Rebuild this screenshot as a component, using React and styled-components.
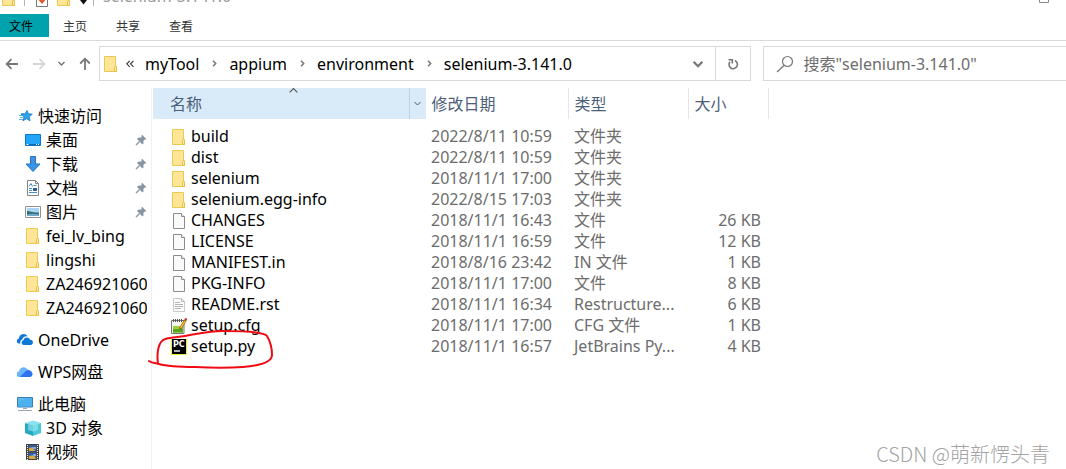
import { useState } from 'react';
import styled, { createGlobalStyle } from 'styled-components';

const GlobalStyle = createGlobalStyle`
    * {
        box-sizing: border-box;
    }

    html, body, #root {
        height: 100%;
    }

    body {
        margin: 0;
        overflow: hidden;
        background: #fff;
        color: #000;
        font: 16px/24px 'Noto Sans', 'Noto Sans CJK SC', sans-serif;
    }

    button, input {
        margin: 0;
        padding: 0;
        border: 0;
        background: none;
        color: inherit;
        font: inherit;
    }

    a {
        color: inherit;
        text-decoration: none;
    }

    svg {
        display: block;
        flex: none;
    }
`;

const Window = styled.div`
    display: flex;
    flex-direction: column;
    min-height: 100%;
    position: relative;
`;

const TitleBar = styled.header`
    display: flex;
    align-items: flex-end;
    justify-content: space-between;
    height: 14px;
    overflow: hidden;
`;

const QuickBar = styled.div`
    display: flex;
    align-items: center;
    height: 32px;
`;

const QuickItem = styled.span`
    display: flex;
    align-items: center;
    justify-content: center;
    width: ${props => props.$width}px;
`;

const Divider = styled.span`
    width: 1px;
    height: 16px;
    background: #b5b5b5;
`;

const Title = styled.span`
    padding: 0 0 4px 8px;
    color: #999;
`;

const MaxButton = styled.button`
    display: flex;
    align-items: center;
    justify-content: center;
    width: 45px;
    height: 32px;
`;

const Ribbon = styled.nav`
    display: flex;
    height: 27px;
    border-bottom: 1px solid #dadbdc;
    font-size: 12px;
`;

const Tab = styled.button`
    height: 23px;
    padding: ${props => props.$active ? '0 16px 0 9px' : '0 14px'};
    margin-right: ${props => props.$active ? 0 : 1}px;
    background: ${props => props.$active ? '#00a2ae' : 'transparent'};
    color: ${props => props.$active ? '#000' : '#333'};
    line-height: 25px;
`;

const Toolbar = styled.div`
    display: flex;
    height: 35px;
    margin-top: 5px;
`;

const History = styled.div`
    display: flex;
    align-items: center;
    justify-content: space-between;
    width: 99px;
    padding: 0 7px 0 5px;
`;

const IconButton = styled.button`
    display: flex;
    align-items: center;
    justify-content: center;
`;

const AddressBar = styled.div`
    display: flex;
    align-items: center;
    flex: 69 1 0;
    min-width: 0;
    padding-left: 3px;
    border: 1px solid #d9d9d9;

    ${IconButton} {
        align-self: stretch;
        width: 34px;
    }
`;

const Crumbs = styled.div`
    display: flex;
    align-items: center;
    flex: 1;
    min-width: 0;
    overflow: hidden;
    white-space: nowrap;
    padding-left: 7px;

    svg {
        margin: 0 11px 0 12px;
    }

    svg:first-child {
        margin: 0 11px 0 0;
    }
`;

const RefreshBox = styled.div`
    display: flex;
    align-self: stretch;
    border-left: 1px solid #d9d9d9;
`;

const SearchBox = styled.label`
    display: flex;
    align-items: center;
    flex: 31 1 0;
    min-width: 0;
    margin-left: 12px;
    padding-left: 12px;
    gap: 10px;
    border: 1px solid #d9d9d9;
    border-right: 0;

    input {
        flex: 1;
        min-width: 0;
        outline: none;
    }

    input::placeholder {
        color: #6d6d6d;
        opacity: 1;
    }
`;

const Body = styled.div`
    display: flex;
    flex: 1;
    margin-top: 7px;
`;

const Sidebar = styled.aside`
    width: 152px;
    padding: 16px 4px 0 17px;
    border-right: 1px solid #f0f0f0;
`;

const TreeGroup = styled.div`
    margin-bottom: 8px;
`;

const TreeItem = styled.a`
    display: flex;
    align-items: center;
    gap: 5px;
    height: 24px;
    padding-left: ${props => props.$child ? 8 : 0}px;
    white-space: nowrap;
    overflow: hidden;

    span {
        flex: 1;
        min-width: 0;
        overflow: hidden;
    }
`;

const Main = styled.main`
    flex: 1;
    min-width: 0;
    padding-left: 1px;
`;

const FileTable = styled.table`
    table-layout: fixed;
    width: 615px;
    border-collapse: collapse;

    tbody::before {
        content: '';
        display: block;
        height: 7px;
    }
`;

const Head = styled.th`
    position: relative;
    height: 31px;
    padding: 0 0 0 ${props => props.$sorted ? 17 : 6}px;
    border-right: 1px solid ${props => props.$sorted ? '#d9ebf9' : '#e5e5e5'};
    background: ${props => props.$sorted ? '#d9ebf9' : 'transparent'};
    color: #4c607a;
    font-weight: 400;
    text-align: left;
`;

const SortMark = styled.span`
    position: absolute;
    top: -2px;
    left: 50%;
`;

const FilterButton = styled.button`
    position: absolute;
    top: 0;
    right: 0;
    bottom: 0;
    display: flex;
    align-items: center;
    justify-content: center;
    width: 16px;
    border-left: 1px solid #b9d3e6;
`;

const Cell = styled.td`
    height: 21px;
    padding: 0 ${props => props.$right ? 7 : 0}px 0 6px;
    color: #6d6d6d;
    line-height: 21px;
    text-align: ${props => props.$right ? 'right' : 'left'};
    white-space: nowrap;
`;

const NameCell = styled(Cell)`
    position: relative;
    padding-left: 18px;
    color: #000;
`;

const FileLink = styled.a`
    display: flex;
    align-items: center;
    gap: 4px;
`;

const Mark = styled.svg`
    position: absolute;
    top: -8px;
    left: -7px;
    pointer-events: none;
`;

const Watermark = styled.div`
    position: absolute;
    right: 16px;
    bottom: 4px;
    color: #a3a3a3;
    font: 300 20px/28px 'Noto Sans CJK SC', sans-serif;
`;

function FolderIcon() {
    return (
        <svg width="16" height="16" viewBox="0 0 16 16">
            <path d="M1.500.5h11v10h1v5h-12z" fill="#ffe596" stroke="#ecc850" />
            <path d="M11.500 15.500v-4l1-1.500 1 1.500v4z" fill="#ffeaa8" stroke="#e6bf45" />
        </svg>
    );
}

function PageIcon() {
    return (
        <svg width="16" height="16" viewBox="0 0 16 16">
            <path d="M2.500.5h8l3 3v12h-11z" fill="#fafafa" stroke="#8c8c8c" />
            <path d="M10.500.5v3h3" fill="#fff" stroke="#8c8c8c" />
        </svg>
    );
}

function TextIcon() {
    return (
        <svg width="16" height="16" viewBox="0 0 16 16">
            <path d="M2.500 1.500h8l3 3v10h-11z" fill="#fcfcfc" stroke="#c9c9c9" />
            <path d="M10.500 1.500v3h3M4 5.500h5M4 7.500h8M4 9.500h8M4 11.500h6" fill="none" stroke="#b5b5b5" />
        </svg>
    );
}

function NotepadIcon() {
    return (
        <svg width="16" height="16" viewBox="0 0 16 16">
            <path d="M.5 2.500h12.500v13H.5z" fill="#f5f8ee" stroke="#777" />
            <path d="M2 8h10v6.500H2z" fill="#9bd13c" />
            <path d="M2 11h10v3.500H2z" fill="#56a81f" />
            <path d="M2.500 1v3M4.500 1v3M6.500 1v3M8.500 1v3M10.500 1v3" stroke="#555" />
            <path d="M14.500 2L9 11" stroke="#8a5b12" strokeWidth="2.600" />
            <path d="M14 2.800L9.500 10" stroke="#f6b52b" strokeWidth="1.600" />
            <path d="M14 .5l2 1.500" stroke="#c33" strokeWidth="2" />
        </svg>
    );
}

function PyCharmIcon() {
    return (
        <svg width="16" height="16" viewBox="0 0 16 16">
            <path d="M0 0h16v16H0z" fill="#e9ee3c" />
            <path d="M1 0h14v15H1z" fill="#000" />
            <text x="2" y="8" fill="#fff" fontFamily="'DejaVu Sans', sans-serif" fontSize="8" fontWeight="700">PC</text>
            <path d="M3 12h6" stroke="#fff" strokeWidth="1.400" />
        </svg>
    );
}

function StarIcon() {
    return (
        <svg width="16" height="16" viewBox="0 0 16 16">
            <path d="M10 2.500l1.300 3.300 4 .3-3 2.700.8 4-3.500-2-3.700 2 1.200-4L4 6.300l4-.5z" fill="#2ea3ea" stroke="#1679c4" strokeWidth=".8" />
            <path d="M4 5.500h3M2 7.500h4M3 9.500h3M2 11.500h4" stroke="#3b9be0" strokeWidth=".8" />
        </svg>
    );
}

function DesktopIcon() {
    return (
        <svg width="16" height="16" viewBox="0 0 16 16">
            <path d="M.5 2.500h15v11H.5z" fill="#22a4f8" stroke="#0b78cc" />
            <path d="M1 12.500h14" stroke="#0968b4" />
            <path d="M1.500 12.500h2M11 12.500h1M13 12.500h1" stroke="#fff" />
        </svg>
    );
}

function DownloadIcon() {
    return (
        <svg width="16" height="16" viewBox="0 0 16 16">
            <path d="M5.500.5h5v7.500h4.500L8 15.500 1 8h4.500z" fill="#3c93e4" stroke="#2674bd" />
        </svg>
    );
}

function DocumentIcon() {
    return (
        <svg width="16" height="16" viewBox="0 0 16 16">
            <path d="M2.500.5h8l3 3v12h-11z" fill="#fff" stroke="#858585" />
            <path d="M10.500.5v3h3" fill="none" stroke="#858585" />
            <path d="M4 6.500l2-3 1.500 3M8.500 5.500h3M4 8.500h3M4 10.500h3M4 12.500h8" fill="none" stroke="#4392cf" />
            <path d="M8 8h4v3H8z" fill="#28629b" />
        </svg>
    );
}

function PictureIcon() {
    return (
        <svg width="16" height="16" viewBox="0 0 16 16">
            <path d="M.5 2.500h15v11H.5z" fill="#fff" stroke="#919191" />
            <path d="M2 4h12v8H2z" fill="#a8d5f1" />
            <path d="M2 7c3 0 4 1.500 12 1.500V12H2z" fill="#356e75" />
            <path d="M2 10.500c4-1 8-1 12 0V12H2z" fill="#6da9ce" />
        </svg>
    );
}

function OneDriveIcon() {
    return (
        <svg width="16" height="16" viewBox="0 0 16 16">
            <path d="M1.500 11.500A2.600 2.600 0 0 1 2 6.500 4.500 4.500 0 0 1 10.500 4.500a4.300 4.300 0 0 0-5.200 2.700A3.500 3.500 0 0 0 3.500 11.500z" fill="#0f78d4" />
            <path d="M6.500 13a2.500 2.500 0 0 1-.2-4.800 3.700 3.700 0 0 1 6.900-.5 2.700 2.700 0 0 1 .8 5.300z" fill="#0f78d4" />
        </svg>
    );
}

function WpsCloudIcon() {
    return (
        <svg width="16" height="16" viewBox="0 0 16 16">
            <path d="M2.500 13A2.700 2.700 0 0 1 2 7.500 4.500 4.500 0 0 1 9 4l5 4.500L9 13z" fill="#6bb5fb" />
            <path d="M3 12.500L9 7a3.800 3.800 0 0 1 6 1.500A3 3 0 0 1 13.500 13H4z" fill="#2e73ed" />
        </svg>
    );
}

function ComputerIcon() {
    return (
        <svg width="16" height="16" viewBox="0 0 16 16">
            <path d="M.5 1.500h15v9.500H.5z" fill="#5bbcf5" stroke="#3a7fae" />
            <path d="M1 11V6l9-4h5v9z" fill="#3da5e6" opacity=".5" />
            <path d="M6 12.500h4M1 14.500h14" stroke="#9ba7b0" />
        </svg>
    );
}

function CubeIcon() {
    return (
        <svg width="16" height="16" viewBox="0 0 16 16">
            <path d="M0 3l8-2.500L16 3 8 5.500z" fill="#8ce2ee" />
            <path d="M0 3l8 2.500V16l-8-3z" fill="#27a9c1" />
            <path d="M16 3L8 5.500V16l8-3z" fill="#4cc7da" />
            <path d="M3 4l5 1.500L13 4v6l-5 1.500L3 10z" fill="#9ce9f2" opacity=".6" />
        </svg>
    );
}

function FilmIcon() {
    return (
        <svg width="16" height="16" viewBox="0 0 16 16">
            <path d="M1.500.5h12v15h-12z" fill="#4d4d4d" stroke="#3f3f3f" />
            <path d="M2.500 1v15M12.500 1v15" stroke="#eee" strokeDasharray="1 1" />
            <path d="M4 1.500h7v6H4zM4 9h7v6H4z" fill="#2d5fc0" />
            <path d="M4 4l4-1 2 4H4zM4 12l5-1 2 4H4z" fill="#d9a93a" />
            <path d="M8 3h3v2H8zM8 10h3v2H8z" fill="#79a8e9" />
        </svg>
    );
}

function PinIcon() {
    return (
        <svg width="12" height="12" viewBox="0 0 12 12">
            <path d="M7 1l4 4-1.500.5L8 7l.2 2.500-1 .5L2.500 5l.5-1h2.500L7 2.500z" fill="#8695a2" stroke="#8695a2" strokeWidth=".6" />
            <path d="M4.500 7.500L1 11" stroke="#8695a2" strokeWidth="1.300" />
        </svg>
    );
}

function Chevron({ dir = 'down', size = 7, color = '#777', weight = 1.5 }) {
    const paths = {
        down: 'M0.500 2l3 3 3-3',
        up: 'M0.500 5l3-3 3 3',
        right: 'M2 .8l2.700 2.700L2 6.200',
    };
    return (
        <svg width={size} height={size} viewBox="0 0 7 7">
            <path d={paths[dir]} fill="none" stroke={color} strokeWidth={weight} />
        </svg>
    );
}

function Arrow({ turn = 0, color = '#777' }) {
    return (
        <svg width="14" height="14" viewBox="0 0 14 14">
            <path d="M13 7H2M6.500 2.200L1.700 7l4.800 4.800" transform={`rotate(${turn} 7 7)`} fill="none" stroke={color} strokeWidth="1.800" />
        </svg>
    );
}

const quickAccess = [
    { label: '桌面', Icon: DesktopIcon, pinned: true },
    { label: '下载', Icon: DownloadIcon, pinned: true },
    { label: '文档', Icon: DocumentIcon, pinned: true },
    { label: '图片', Icon: PictureIcon, pinned: true },
    { label: 'fei_lv_bing', Icon: FolderIcon },
    { label: 'lingshi', Icon: FolderIcon },
    { label: 'ZA246921060', Icon: FolderIcon },
    { label: 'ZA246921060', Icon: FolderIcon },
];

const tree = [
    { label: '快速访问', Icon: StarIcon, items: quickAccess },
    { label: 'OneDrive', Icon: OneDriveIcon, items: [] },
    { label: 'WPS网盘', Icon: WpsCloudIcon, items: [] },
    {
        label: '此电脑',
        Icon: ComputerIcon,
        items: [
            { label: '3D 对象', Icon: CubeIcon },
            { label: '视频', Icon: FilmIcon },
        ],
    },
];

const files = [
    { name: 'build', date: '2022/8/11 10:59', type: '文件夹', size: '', Icon: FolderIcon },
    { name: 'dist', date: '2022/8/11 10:59', type: '文件夹', size: '', Icon: FolderIcon },
    { name: 'selenium', date: '2018/11/1 17:00', type: '文件夹', size: '', Icon: FolderIcon },
    { name: 'selenium.egg-info', date: '2022/8/15 17:03', type: '文件夹', size: '', Icon: FolderIcon },
    { name: 'CHANGES', date: '2018/11/1 16:43', type: '文件', size: '26 KB', Icon: PageIcon },
    { name: 'LICENSE', date: '2018/11/1 16:59', type: '文件', size: '12 KB', Icon: PageIcon },
    { name: 'MANIFEST.in', date: '2018/8/16 23:42', type: 'IN 文件', size: '1 KB', Icon: PageIcon },
    { name: 'PKG-INFO', date: '2018/11/1 17:00', type: '文件', size: '8 KB', Icon: PageIcon },
    { name: 'README.rst', date: '2018/11/1 16:34', type: 'Restructure...', size: '6 KB', Icon: TextIcon },
    { name: 'setup.cfg', date: '2018/11/1 17:00', type: 'CFG 文件', size: '1 KB', Icon: NotepadIcon },
    { name: 'setup.py', date: '2018/11/1 16:57', type: 'JetBrains Py...', size: '4 KB', Icon: PyCharmIcon, marked: true },
];

function TreeRow({ item, child }) {
    const { label, Icon, pinned } = item;
    return (
        <TreeItem href="#" $child={child}>
            <Icon />
            <span>{label}</span>
            {pinned ? <PinIcon /> : null}
        </TreeItem>
    );
}

export default function App() {
    const [query, setQuery] = useState('');

    return (
        <Window>
            <GlobalStyle />
            <TitleBar>
                <QuickBar>
                    <QuickItem $width={18}><FolderIcon /></QuickItem>
                    <QuickItem $width={12}><Divider /></QuickItem>
                    <QuickItem $width={24}>
                        <svg width="12" height="18" viewBox="0 0 12 18">
                            <path d="M.5.5h11v17H.5z" fill="#fff" stroke="#777" />
                            <path d="M3 9.500l3 3.500 3-3.500" fill="none" stroke="#e2592a" strokeWidth="2.500" />
                        </svg>
                    </QuickItem>
                    <QuickItem $width={20}><FolderIcon /></QuickItem>
                    <QuickItem $width={18}>
                        <svg width="7" height="13" viewBox="0 0 7 13">
                            <path d="M0 8h7L3.500 12.500z" fill="#111" />
                        </svg>
                    </QuickItem>
                    <QuickItem $width={3}><Divider /></QuickItem>
                    <Title>selenium-3.141.0</Title>
                </QuickBar>
                <MaxButton type="button" aria-label="最大化">
                    <svg width="10" height="10" viewBox="0 0 10 10">
                        <path d="M.5.5h9v9h-9z" fill="none" stroke="#888" />
                    </svg>
                </MaxButton>
            </TitleBar>

            <Ribbon>
                <Tab type="button" $active>文件</Tab>
                <Tab type="button">主页</Tab>
                <Tab type="button">共享</Tab>
                <Tab type="button">查看</Tab>
            </Ribbon>

            <Toolbar>
                <History>
                    <IconButton type="button" aria-label="后退"><Arrow /></IconButton>
                    <IconButton type="button" aria-label="前进"><Arrow turn={180} color="#d5d5d5" /></IconButton>
                    <IconButton type="button" aria-label="最近"><Chevron /></IconButton>
                    <IconButton type="button" aria-label="向上"><Arrow turn={90} /></IconButton>
                </History>
                <AddressBar>
                    <FolderIcon />
                    <Crumbs>
                        <svg width="8" height="8" viewBox="0 0 8 8">
                            <path d="M3.800.8L.8 3.800l3 3M7.500.8l-3 3 3 3" fill="none" stroke="#333" strokeWidth="1.100" />
                        </svg>
                        <a href="#">myTool</a>
                        <Chevron dir="right" />
                        <a href="#">appium</a>
                        <Chevron dir="right" />
                        <a href="#">environment</a>
                        <Chevron dir="right" />
                        <a href="#">selenium-3.141.0</a>
                    </Crumbs>
                    <IconButton type="button" aria-label="以前的位置"><Chevron size={10} /></IconButton>
                    <RefreshBox>
                        <IconButton type="button" aria-label="刷新">
                            <svg width="12" height="12" viewBox="0 0 12 12">
                                <path d="M7.800 2.600A4.200 4.200 0 1 1 3 3.800" fill="none" stroke="#777" strokeWidth="1.600" />
                                <path d="M1.500 1.700h3.800v3.800" fill="none" stroke="#777" strokeWidth="1.600" />
                            </svg>
                        </IconButton>
                    </RefreshBox>
                </AddressBar>
                <SearchBox>
                    <svg width="18" height="18" viewBox="0 0 18 18">
                        <circle cx="11.500" cy="6.500" r="5" fill="none" stroke="#777" strokeWidth="1.200" />
                        <path d="M8 10.500L1 17" stroke="#777" strokeWidth="1.300" />
                    </svg>
                    <input
                        type="text"
                        aria-label="搜索"
                        placeholder={'搜索"selenium-3.141.0"'}
                        value={query}
                        onChange={e => setQuery(e.target.value)}
                    />
                </SearchBox>
            </Toolbar>

            <Body>
                <Sidebar>
                    {tree.map(group => (
                        <TreeGroup key={group.label}>
                            <TreeRow item={group} />
                            {group.items.map((item, i) => <TreeRow key={i} item={item} child />)}
                        </TreeGroup>
                    ))}
                </Sidebar>
                <Main>
                    <FileTable>
                        <colgroup>
                            <col width="272" />
                            <col width="143" />
                            <col width="120" />
                            <col width="80" />
                        </colgroup>
                        <thead>
                            <tr>
                                <Head $sorted>
                                    名称
                                    <SortMark><Chevron dir="up" size={9} color="#555" weight={0.9} /></SortMark>
                                    <FilterButton type="button" aria-label="筛选">
                                        <Chevron color="#555" weight={1} />
                                    </FilterButton>
                                </Head>
                                <Head>修改日期</Head>
                                <Head>类型</Head>
                                <Head>大小</Head>
                            </tr>
                        </thead>
                        <tbody>
                            {files.map(({ name, date, type, size, Icon, marked }) => (
                                <tr key={name}>
                                    <NameCell>
                                        <FileLink href="#"><Icon />{name}</FileLink>
                                        {marked
                                            ? <Mark width="130" height="44" viewBox="146 328 130 44">
                                                <path
                                                    d="M149 361c3 2 6 2 10 3 10 3 22 3 36 3 17 1 35 1 48 0 12-1 29-4 29-12 0-6-2-14-5-19-3-4-21-5-44-5-15 0-27 3-38 5-12 2-20 1-24 6-4 6-4 14-3 22"
                                                    fill="none"
                                                    stroke="#f00b14"
                                                    strokeWidth="2"
                                                    strokeLinecap="round"
                                                />
                                            </Mark>
                                            : null
                                        }
                                    </NameCell>
                                    <Cell>{date}</Cell>
                                    <Cell>{type}</Cell>
                                    <Cell $right>{size}</Cell>
                                </tr>
                            ))}
                        </tbody>
                    </FileTable>
                </Main>
            </Body>
            <Watermark>CSDN @萌新愣头青</Watermark>
        </Window>
    );
}
